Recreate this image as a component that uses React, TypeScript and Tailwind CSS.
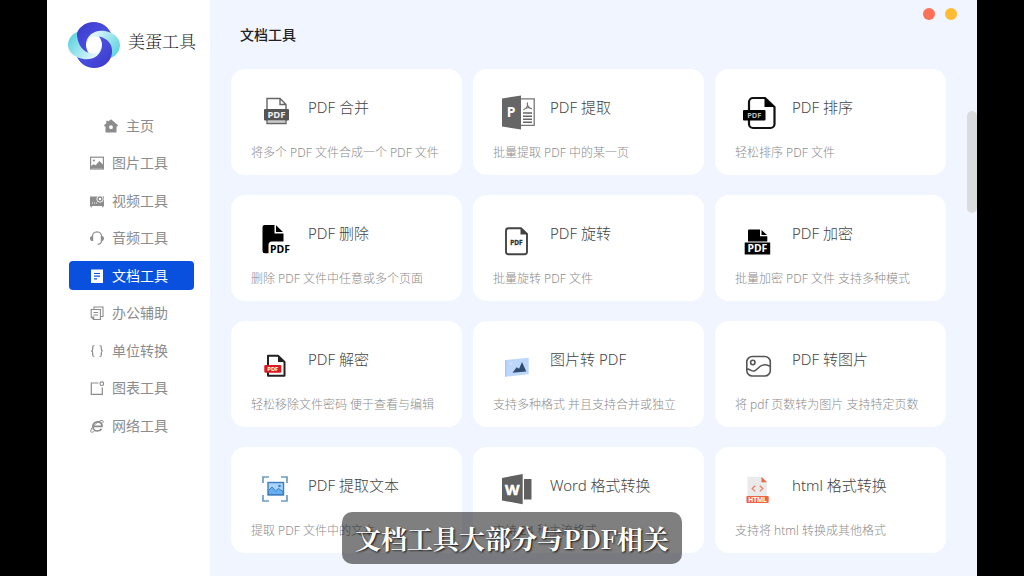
import type { ReactNode } from "react";

interface NavItem {
  label: string;
  icon: ReactNode;
  active?: boolean;
}

interface Tool {
  title: string;
  desc: string;
  icon: ReactNode;
}

const LABEL = "Noto Sans, Liberation Sans, sans-serif";

/** Small bold caption used inside the file icons. */
function Caption({ x, y, size, fill, children }: { x: number; y: number; size: number; fill: string; children: string }) {
  return (
    <text x={x} y={y} fontSize={size} fontWeight={700} fontFamily={LABEL} fill={fill} textAnchor="middle">
      {children}
    </text>
  );
}

const navItems: NavItem[] = [
  {
    label: "主页",
    icon: (
      <path
        fill="currentColor"
        fillRule="evenodd"
        d="M7 .3 14 6.2l-.7 1.300H12.500V13.500H1.500V7.500H.7L0 6.200 2.300 4.300V1.800h2v.8ZM7 6.300a1.900 1.900 0 1 0 0 3.800 1.900 1.900 0 0 0 0-3.800Z"
      />
    ),
  },
  {
    label: "图片工具",
    icon: (
      <>
        <rect x="0.600" y="1.200" width="12.800" height="11.800" fill="none" stroke="currentColor" strokeWidth="1.200" />
        <circle cx="3.900" cy="4.500" r="1.100" fill="currentColor" />
        <path fill="currentColor" d="M1 12.500V10l2.600-1.800 2 1L9.400 5l4 4v3.500Z" />
      </>
    ),
  },
  {
    label: "视频工具",
    icon: (
      <>
        <path fill="currentColor" d="M0 2.500h14V12h-.6v1.200H12V12H2v1.200H.6V12H0Z" />
        <circle cx="10" cy="5" r="3.200" fill="currentColor" stroke="#fff" strokeWidth="0.900" />
        <circle cx="10" cy="5" r="1.200" fill="#fff" />
        <path stroke="#fff" strokeWidth="0.900" d="M2 9h1M4 9h1M6 9h1" />
      </>
    ),
  },
  {
    label: "音频工具",
    icon: (
      <>
        <path fill="none" stroke="currentColor" strokeWidth="1.200" d="M2.400 6V5.500a4.600 4.600 0 0 1 9.200 0v3.700c0 2.400-1.500 3.900-4 4.100" />
        <path fill="currentColor" d="M3.200 4.800v5.400Q0 10 0 7.500T3.200 4.800ZM10.800 4.800v5.400Q14 10 14 7.500T10.800 4.800Z" />
      </>
    ),
  },
  {
    label: "文档工具",
    active: true,
    icon: (
      <>
        <rect x="1" y="0.500" width="12" height="13.500" fill="currentColor" />
        <path stroke="#0850dd" strokeWidth="1.200" d="M4 4.500h6M4 7.200h6M4 9.900h3" />
      </>
    ),
  },
  {
    label: "办公辅助",
    icon: (
      <path
        fill="none"
        stroke="currentColor"
        strokeWidth="1.100"
        d="M4 3.500V1h9v9.500h-2.600M1.200 3.500h9.200v10H3.600l-2.400-2.400ZM3.500 6.500h4.600M3.500 9h4.600M1.200 11h2.600v2.500"
      />
    ),
  },
  {
    label: "单位转换",
    icon: (
      <path
        fill="none"
        stroke="currentColor"
        strokeWidth="1.200"
        d="M4.400 1.500C3 1.500 2.700 2 2.700 3v2.200C2.700 6.400 2.200 7 1 7c1.200 0 1.700.6 1.700 1.800V11c0 1 .3 1.500 1.700 1.500M9.600 1.500c1.400 0 1.700.5 1.700 1.500v2.200c0 1.200.5 1.800 1.700 1.800-1.200 0-1.700.6-1.700 1.800V11c0 1-.3 1.500-1.700 1.500"
      />
    ),
  },
  {
    label: "图表工具",
    icon: (
      <>
        <path fill="none" stroke="currentColor" strokeWidth="1.200" d="M8.500 2H1.300v11.300h11V6.500" />
        <circle cx="11.800" cy="2.700" r="1.800" fill="none" stroke="currentColor" strokeWidth="1.100" />
      </>
    ),
  },
  {
    label: "网络工具",
    icon: (
      <>
        <path
          fill="none"
          stroke="currentColor"
          strokeWidth="1.700"
          d="M3 7.400h9c0-2.800-1.900-4.600-4.500-4.600S2.900 4.800 2.900 7.400 4.900 12 7.500 12c1.900 0 3.300-.8 4-2.200"
        />
        <path
          fill="none"
          stroke="currentColor"
          strokeWidth="1"
          d="M12.600 4.200C14 1.800 13 .6 10 2 6 3.800 2 7.800.9 11c-.8 2.600 1 2.800 3.600 1.200"
        />
      </>
    ),
  },
];

const tools: Tool[] = [
  {
    title: "PDF 合并",
    desc: "将多个 PDF 文件合成一个 PDF 文件",
    icon: (
      <>
        <path fill="none" stroke="#666" strokeWidth="1.400" d="M11 17V5.500h13l6 6V17M11 27v3.500h19V27M24 5.500v6h6" />
        <path stroke="#999" d="M12 29h17" />
        <rect x="8" y="16" width="25" height="11.500" rx="1" fill="#555" />
        <Caption x={20.500} y={25.200} size={9.500} fill="#eee">PDF</Caption>
      </>
    ),
  },
  {
    title: "PDF 提取",
    desc: "批量提取 PDF 中的某一页",
    icon: (
      <>
        <path fill="none" stroke="#777" strokeWidth="1.300" d="M22 5.800h14.200v26.600H22" />
        <path fill="#666" d="m4 5.500 19-3v34L4 33.500Z" />
        <path fill="none" stroke="#777" strokeWidth="1.200" d="M29.300 9.500c.8 3.200-1 6-4 7.500M29.500 12c.8 2.600 2.200 3.500 4.500 3.600M27 15.800c2-1.200 4-1.300 6-.6" />
        <path stroke="#666" strokeWidth="1.400" d="M25 20h9M25 23.200h9M25 26.200h9M25 29.200h9" />
        <Caption x={13} y={24} size={14} fill="#fff">P</Caption>
      </>
    ),
  },
  {
    title: "PDF 排序",
    desc: "轻松排序 PDF 文件",
    icon: (
      <>
        <path fill="none" stroke="#111" strokeWidth="2.200" strokeLinejoin="round" d="M25 5H13a4 4 0 0 0-4 4v22a4 4 0 0 0 4 4h17.500a4 4 0 0 0 4-4V14Z" />
        <path fill="#000" d="M24.500 4.500V14H34Z" />
        <rect x="3" y="17" width="22.500" height="10.500" rx="1" fill="#000" />
        <Caption x={14.300} y={25} size={7.500} fill="#bbb">PDF</Caption>
      </>
    ),
  },
  {
    title: "PDF 删除",
    desc: "删除 PDF 文件中任意或多个页面",
    icon: (
      <>
        <path fill="#000" d="M9 6h9.500v8.500h9v8H16a3.500 3.500 0 0 0-3.500 3.500v8.200H9a2.500 2.500 0 0 1-2.500-2.500v-23A2.500 2.500 0 0 1 9 6Z" />
        <path fill="#000" d="M20 6.200V13h7Z" />
        <Caption x={24} y={34.200} size={10.500} fill="#000">PDF</Caption>
      </>
    ),
  },
  {
    title: "PDF 旋转",
    desc: "批量旋转 PDF 文件",
    icon: (
      <>
        <path fill="none" stroke="#444" strokeWidth="1.900" strokeLinejoin="round" d="M23 9.300H10.500A2.500 2.500 0 0 0 8 11.800v21a2.500 2.500 0 0 0 2.500 2.500h16a2.500 2.500 0 0 0 2.500-2.500V15Z" />
        <path fill="#444" d="M22.500 9v6.500H29Z" />
        <text x="18.500" y="26" fontSize="6.500" fontWeight="700" fontFamily={LABEL} fill="#333" stroke="#333" strokeWidth="0.300" textAnchor="middle">
          PDF
        </text>
      </>
    ),
  },
  {
    title: "PDF 加密",
    desc: "批量加密 PDF 文件 支持多种模式",
    icon: (
      <>
        <path fill="#000" d="M8 11.500a1 1 0 0 1 1-1h11v6.700h7.300v5.300H8Z" />
        <path fill="#000" d="M21.500 11v5H27Z" />
        <rect x="4.700" y="23.500" width="25.500" height="12" fill="#000" />
        <Caption x={17.400} y={33.300} size={10.500} fill="#fff">PDF</Caption>
      </>
    ),
  },
  {
    title: "PDF 解密",
    desc: "轻松移除文件密码 便于查看与编辑",
    icon: (
      <>
        <path fill="none" stroke="#222" strokeWidth="2" strokeLinejoin="round" d="M22 10.700H12v20h16.500V17Z" />
        <path fill="#222" d="M22 10v7h7Z" />
        <rect x="8.300" y="20" width="17" height="7.800" rx="1.200" fill="#d91c24" />
        <Caption x={16.800} y={26} size={5.800} fill="#fff">PDF</Caption>
      </>
    ),
  },
  {
    title: "图片转 PDF",
    desc: "支持多种格式 并且支持合并或独立",
    icon: (
      <>
        <path fill="#bdd7fb" d="m7 15 23.700-2.300v16.600L7 31.700Z" />
        <path fill="#a5c8f6" d="M7 15h1.500v16.500L7 31.700Z" />
        <circle cx="13" cy="18.500" r="1.500" fill="#d6dcf5" />
        <path fill="#2f4c73" d="m14.500 27.800 4.200-5.500 2.400 1.400L24 17l4.300 9.600Z" />
      </>
    ),
  },
  {
    title: "PDF 转图片",
    desc: "将 pdf 页数转为图片 支持特定页数",
    icon: (
      <g fill="none" stroke="#555" strokeWidth="1.600">
        <rect x="6.800" y="11.500" width="23.500" height="19.500" rx="5.500" />
        <circle cx="12.800" cy="17.500" r="2.200" />
        <path d="M6.800 24.200c3-.8 4.500 2.500 7.500 1.800 3.500-1 4.500-6.300 11-6.300 2 0 3.500.8 5 1.700" />
      </g>
    ),
  },
  {
    title: "PDF 提取文本",
    desc: "提取 PDF 文件中的文本",
    icon: (
      <>
        <path fill="none" stroke="#6f9cc6" strokeWidth="1.700" d="M7 12V6h6M25 6h6v6M31 24v6h-6M13 30H7v-6" />
        <rect x="12" y="11.500" width="15.500" height="12.500" fill="#aad4fa" stroke="#3c7fc0" strokeWidth="1.400" />
        <path fill="#68adef" stroke="#3c7fc0" strokeWidth="1" d="M12.500 19.500 16 16l3.500 4 3-2.500 4.500 3V23.500H12.500Z" />
        <circle cx="23.500" cy="15" r="1.300" fill="#3c7fc0" />
      </>
    ),
  },
  {
    title: "Word 格式转换",
    desc: "支持 24 种主流格式",
    icon: (
      <>
        <rect x="26" y="8" width="7.500" height="20.500" fill="#606060" />
        <path fill="#606060" d="m4 7 20.700-4v30.300L4 29.500Z" />
        <text x="14.200" y="23.500" fontSize="15" fontWeight="700" fontFamily={LABEL} fill="#fff" stroke="#fff" strokeWidth="0.500" textAnchor="middle">
          W
        </text>
      </>
    ),
  },
  {
    title: "html 格式转换",
    desc: "支持将 html 转换成其他格式",
    icon: (
      <>
        <path fill="#e9eaea" d="M7.500 5.700h14l5.500 5.500V26H7.500Z" />
        <path fill="#ee6449" d="M21.500 6v5.200H27Z" />
        <path fill="none" stroke="#ee7a60" strokeWidth="1.200" d="m15.200 14.800-3 2.800 3 2.800M19.800 14.800l3 2.800-3 2.800" />
        <rect x="6.400" y="25" width="22.300" height="7" rx="1" fill="#ee6449" />
        <Caption x={17.500} y={30.800} size={6.500} fill="#fff">HTML</Caption>
      </>
    ),
  },
];

/** Half of the swirl; the other half is the same shape turned round. */
function Blades() {
  return (
    <>
      <path fill="url(#violet)" d="M8 15C9 6 17 0 26 0c8 0 15 5 17.500 12.500C34 9 20 11 18.500 22c-.5 4 .5 7 2.500 9.500C13 30 7 24 8 15Z" />
      <path fill="url(#aqua)" d="M18 22C19 10 32 6 42 10.500c6 2 10 7 10 12.500 0 6-4 11-9 13C43.500 26 38 14.500 27 14.500c-5 0-8 3-9 7.500Z" />
    </>
  );
}

function Logo() {
  return (
    <svg viewBox="0 0 52 46" className="h-[46px] w-[52px] shrink-0" aria-hidden="true">
      <defs>
        <linearGradient id="violet" x1="0" y1="0" x2="1" y2="1">
          <stop offset="0" stopColor="#3a38cc" />
          <stop offset="1" stopColor="#5560ea" />
        </linearGradient>
        <linearGradient id="aqua" x1="0" y1="0" x2="1" y2="0.600">
          <stop offset="0.200" stopColor="#e2f6fd" />
          <stop offset="1" stopColor="#66d6e2" />
        </linearGradient>
      </defs>
      <Blades />
      <g transform="rotate(180 26 23)">
        <Blades />
      </g>
      <circle cx="26" cy="23" r="8" fill="#fff" />
    </svg>
  );
}

function Sidebar() {
  return (
    <aside className="w-[163px] shrink-0 bg-white pt-[22px]">
      <div className="flex items-center gap-2 pl-[21px] font-['Noto_Serif_CJK_SC','Noto_Sans_CJK_SC',serif] text-[17px] font-light text-[#222]">
        <Logo />
        <span className="pb-2 whitespace-nowrap">美蛋工具</span>
      </div>
      <nav className="mt-[43px] mr-4 ml-[22px] flex h-[329px] flex-col justify-between">
        {navItems.map((item) => (
          <a
            key={item.label}
            href="#"
            aria-current={item.active ? "page" : undefined}
            className={
              item.active
                ? "flex h-[29px] items-center justify-center gap-2 rounded bg-[#0850dd] pr-[5px] text-sm text-white"
                : "flex h-[29px] items-center justify-center gap-2 rounded pr-[5px] text-sm text-[#8c8c8c]"
            }
          >
            <svg viewBox="0 0 14 14" className="size-3.5 shrink-0" aria-hidden="true">
              {item.icon}
            </svg>
            {item.label}
          </a>
        ))}
      </nav>
    </aside>
  );
}

function ToolCard({ title, desc, icon }: Tool) {
  return (
    <button type="button" className="flex h-[106px] flex-col rounded-[14px] bg-white px-5 pt-6 text-left">
      <span className="flex gap-3 pl-[5px]">
        <svg viewBox="0 0 40 40" className="size-10 shrink-0" aria-hidden="true">
          {icon}
        </svg>
        <span className="text-[15px] leading-7 font-light whitespace-nowrap text-[#444]">{title}</span>
      </span>
      <span className="mt-[11px] text-xs leading-[18px] font-light whitespace-nowrap text-[#8c8c8c]">{desc}</span>
    </button>
  );
}

export default function App() {
  return (
    <div className="relative min-h-screen bg-black px-[47px] font-['Noto_Sans','Noto_Sans_CJK_SC',sans-serif]">
      <div className="relative flex min-h-screen bg-[#f1f5ff]">
        <Sidebar />
        <main className="min-w-0 flex-1 pt-2 pr-[31px] pb-5 pl-[21px]">
          <div className="-mr-[11px] flex justify-end gap-2.5">
            <button type="button" aria-label="关闭" className="size-3 rounded-full bg-[#ff7058]" />
            <button type="button" aria-label="最小化" className="size-3 rounded-full bg-[#ffbc32]" />
          </div>
          <h1 className="mt-[5px] pl-[9px] text-sm leading-5 font-medium text-[#222]">文档工具</h1>
          <div className="mt-6 grid grid-cols-3 gap-x-[11px] gap-y-5">
            {tools.map((tool) => (
              <ToolCard key={tool.title} {...tool} />
            ))}
          </div>
        </main>
        <div className="absolute top-[111px] right-0 h-[102px] w-2.5 rounded-full bg-[#d9dbdc]" />
      </div>

      <p className="absolute bottom-3 left-1/2 -translate-x-1/2 rounded-[10px] bg-black/50 px-[13px] py-2 font-['Noto_Serif_CJK_SC','Noto_Sans_CJK_SC',serif] text-[26px] leading-9 font-bold whitespace-nowrap text-white [text-shadow:1px_1px_2px_#111]">
        文档工具大部分与PDF相关
      </p>
    </div>
  );
}
